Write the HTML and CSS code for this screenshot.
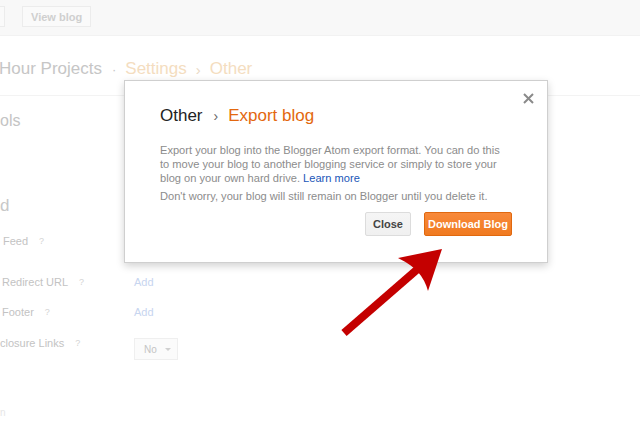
FILE: index.html
```html
<!DOCTYPE html>
<html>
<head>
<meta charset="utf-8">
<link rel="stylesheet" href="styles.css">
</head>
<body>
<div class="page">
  <div class="topbar">
    <span class="tbtn cut"></span>
    <span class="tbtn">View blog</span>
  </div>
  <div class="crumbs">
    <span class="blogname">Hour Projects</span>
    <span class="dot">·</span>
    <span class="crumb">Settings</span>
    <span class="sep">›</span>
    <span class="crumb">Other</span>
  </div>
  <div class="tools">ols</div>
  <div class="section">
    <div class="sechead">d</div>
    <div class="row r-feed"><span class="lbl">Feed</span><span class="q">?</span></div>
    <div class="row r-redirect"><span class="lbl">Redirect URL</span><span class="q">?</span><span class="val add">Add</span></div>
    <div class="row r-footer"><span class="lbl">Footer</span><span class="q">?</span><span class="val add">Add</span></div>
    <div class="row r-links"><span class="lbl">closure Links</span><span class="q">?</span><span class="val"><span class="select">No <span class="caret"></span></span></span></div>
    <div class="tiny">n</div>
  </div>
</div>

<div class="dialog">
  <span class="close-x">
    <svg width="11" height="11" viewBox="0 0 11 11"><path d="M1 1 L10 10 M10 1 L1 10" stroke="#8a8a8a" stroke-width="2"/></svg>
  </span>
  <h2 class="dtitle"><span class="t1">Other</span><span class="tsep">›</span><span class="t2">Export blog</span></h2>
  <p class="dtext"><span class="ln">Export your blog into the Blogger Atom export format. You can do this</span><span class="ln">to move your blog to another blogging service or simply to store your</span><span class="ln">blog on your own hard drive. <a class="learn">Learn more</a></span></p>
  <p class="dtext p2"><span class="ln">Don't worry, your blog will still remain on Blogger until you delete it.</span></p>
  <div class="actions">
    <span class="btn btn-close">Close</span>
    <span class="btn btn-dl">Download Blog</span>
  </div>
</div>

<svg class="arrow" width="640" height="421" viewBox="0 0 640 421">
  <line x1="344" y1="333" x2="420" y2="267" stroke="#c40000" stroke-width="8"/>
  <path d="M442 249 L398 258 Q412 265 418 272 Q425 280 428 291 Z" fill="#c40000"/>
</svg>
</body>
</html>
```

FILE: styles.css
```css
html, body {
  margin: 0;
  padding: 0;
  background: #fff;
  font-family: "Liberation Sans", Arial, sans-serif;
  overflow: hidden;
}
.page {
  width: 640px;
  height: 421px;
  position: relative;
}
.topbar {
  height: 36px;
  background: #f8f8f8;
  border-bottom: 1px solid #f2f2f2;
  display: flex;
  align-items: flex-start;
  padding-top: 6px;
  box-sizing: border-box;
  gap: 17px;
}
.tbtn {
  display: inline-flex;
  align-items: center;
  height: 21px;
  padding: 0 8px;
  border: 1px solid #ececec;
  background: #fafafa;
  font-size: 11px;
  font-weight: bold;
  color: #cfcfcf;
  box-sizing: border-box;
}
.tbtn.cut {
  width: 30px;
  margin-left: -25px;
}
.crumbs {
  height: 60px;
  border-bottom: 1px solid #f3f3f3;
  display: flex;
  align-items: center;
  padding-top: 7px;
  box-sizing: border-box;
  font-size: 17px;
  color: #c6c6c6;
  margin-left: -1px;
}
.dot {
  margin: 0 9px 0 10px;
  font-size: 13px;
}
.crumb {
  color: #f4ddc0;
}
.sep {
  color: #e9d8c4;
  margin: 0 9px 0 9px;
  font-size: 15px;
}
.tools {
  font-size: 16px;
  color: #c4c4c4;
  margin-top: 16px;
  margin-left: 0;
}
.section {
  margin-top: 66px;
}
.sechead {
  font-size: 17px;
  color: #c8c8c8;
  height: 20px;
  line-height: 20px;
  margin-left: 0;
}
.row {
  display: flex;
  align-items: center;
  height: 20px;
  font-size: 11px;
  color: #c3c3c3;
  position: relative;
}
.r-feed { margin-top: 15px; padding-left: 3px; }
.r-redirect { margin-top: 21px; padding-left: 2px; }
.r-footer { margin-top: 10px; padding-left: 2px; }
.r-links { margin-top: 11px; }
.q {
  font-size: 9px;
  color: #d4d4d4;
  margin-left: 11px;
}
.val {
  position: absolute;
  left: 134px;
  top: 0;
  height: 20px;
  display: flex;
  align-items: center;
}
.add {
  color: #c7d5ef;
  font-size: 11px;
}
.select {
  display: inline-flex;
  align-items: center;
  height: 22px;
  width: 44px;
  box-sizing: border-box;
  padding-left: 9px;
  margin-top: 12px;
  border: 1px solid #efefef;
  background: #fbfbfb;
  color: #c4c4c4;
  font-size: 10px;
}
.caret {
  display: inline-block;
  margin-left: 8px;
  border-left: 3px solid transparent;
  border-right: 3px solid transparent;
  border-top: 3px solid #d0d0d0;
}
.tiny {
  margin-top: 54px;
  font-size: 10px;
  color: #e6e6e6;
}

.dialog {
  position: absolute;
  left: 124px;
  top: 80px;
  width: 424px;
  height: 183px;
  box-sizing: border-box;
  background: #fff;
  border: 1px solid #cfcfcf;
  box-shadow: 0 3px 8px rgba(0,0,0,0.18);
  padding: 24px 35px 0 35px;
}
.close-x {
  position: absolute;
  right: 13px;
  top: 12px;
  width: 11px;
  height: 11px;
  display: block;
}
.close-x svg { display: block; }
.dtitle {
  margin: 0;
  font-weight: normal;
  font-size: 17px;
  line-height: 22px;
  display: flex;
  align-items: baseline;
}
.t1 { color: #222; }
.tsep {
  color: #666;
  font-size: 14px;
  margin: 0 10px 0 11px;
}
.t2 { color: #e3680f; }
.dtext {
  margin: 16px 0 0 0;
  font-size: 11.1px;
  line-height: 14px;
  color: #8c8c8c;
}
.ln {
  display: block;
  white-space: nowrap;
  height: 14px;
}
.dtext.p2 {
  margin-top: 4px;
}
.learn {
  color: #1a56b8;
}
.actions {
  display: flex;
  justify-content: flex-end;
  gap: 13px;
  margin-top: 9px;
}
.btn {
  display: inline-flex;
  align-items: center;
  justify-content: center;
  height: 24px;
  box-sizing: border-box;
  font-size: 11px;
  font-weight: bold;
  border-radius: 2px;
}
.btn-close {
  width: 46px;
  background: linear-gradient(#f5f5f5, #f0f0f0);
  border: 1px solid #dcdcdc;
  color: #444;
}
.btn-dl {
  width: 88px;
  background: linear-gradient(#f8893a, #f07a20);
  border: 1px solid #e0680f;
  color: #fff;
}
.arrow {
  position: absolute;
  left: 0;
  top: 0;
  pointer-events: none;
}
```
